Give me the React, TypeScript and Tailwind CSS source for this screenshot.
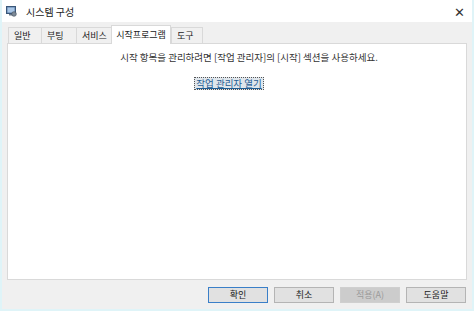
const tabs = [
  { label: "일반", w: "w-[34px]" },
  { label: "부팅", w: "w-[36px]" },
  { label: "서비스", w: "w-[36px]" },
  { label: "시작프로그램", w: "w-[60px]", active: true },
  { label: "도구", w: "w-[32px]" },
];

const AppIcon = () => (
  <svg width="11" height="11" viewBox="0 0 11 11">
    <rect x="0.5" y="0.5" width="9" height="7" fill="#5b7fa8" stroke="#3a5678" />
    <rect x="1.5" y="1.5" width="7" height="5" fill="#a9c6e6" />
    <rect x="3" y="8" width="4" height="1.5" fill="#6b7a8a" />
    <circle cx="8" cy="8" r="2.3" fill="#7d8a98" stroke="#4b5663" strokeWidth="0.7" />
  </svg>
);

const Tab = ({ label, w, active }: { label: string; w: string; active?: boolean }) => {
  if (active) {
    return (
      <div className={"relative z-10 -mb-px flex h-[19px] items-center justify-center border border-b-0 border-[#d9d9d9] bg-white text-[9px] text-[#222] " + w}>
        {label}
      </div>
    );
  }
  return (
    <div className={"-mr-px flex h-[16px] items-center border border-b-0 border-[#d9d9d9] bg-[#f0f0f0] pl-[5px] text-[9px] text-[#222] " + w}>
      {label}
    </div>
  );
};

const Btn = ({ label, focused, disabled }: { label: string; focused?: boolean; disabled?: boolean }) => (
  <div
    className={
      "flex h-[16px] w-[60px] items-center justify-center border text-[9px] " +
      (focused
        ? "border-[#3a7fc8] bg-[#e1e1e1] text-[#222]"
        : disabled
        ? "border-[#cfcfcf] bg-[#cccccc] text-[#9a9a9a]"
        : "border-[#b4b4b4] bg-[#e1e1e1] text-[#222]")
    }
  >
    {label}
  </div>
);

export default function App() {
  return (
    <div
      className="flex h-[311px] w-[474px] flex-col border-x-[2px] border-b-[2px] border-[#dff4f8] bg-[#f0f0f0]"
      style={{ fontFamily: '"Noto Sans CJK KR", "Noto Sans", sans-serif' }}
    >
      {/* title bar */}
      <div className="flex h-[22px] items-center bg-white pl-[4px] pr-[7px]">
        <AppIcon />
        <span className="ml-[9px] text-[10px] text-[#222]">시스템 구성</span>
        <span className="ml-auto text-[13px] font-light leading-none text-[#333]">✕</span>
      </div>

      <div className="flex flex-1 flex-col px-[5px] pt-[3px]">
        {/* tabs */}
        <div className="flex items-end pl-[1px]">
          {tabs.map((t) => (
            <Tab key={t.label} label={t.label} w={t.w} active={t.active} />
          ))}
        </div>

        {/* content */}
        <div className="flex h-[237px] flex-col items-center border border-[#d9d9d9] bg-white">
          <p className="ml-[24px] mt-[6px] text-[9.5px] text-[#333]">
            시작 항목을 관리하려면 [작업 관리자]의 [시작] 섹션을 사용하세요.
          </p>
          <a className="mr-[16px] mt-[13px] border border-dotted border-[#555] bg-[#dfe6ec] px-px text-[9.5px] leading-[11px] text-[#1f5d94] underline">
            작업 관리자 열기
          </a>
        </div>

        {/* buttons */}
        <div className="mt-[7px] flex justify-end gap-[6px] pr-[1px]">
          <Btn label="확인" focused />
          <Btn label="취소" />
          <Btn label="적용(A)" disabled />
          <Btn label="도움말" />
        </div>
      </div>
    </div>
  );
}
